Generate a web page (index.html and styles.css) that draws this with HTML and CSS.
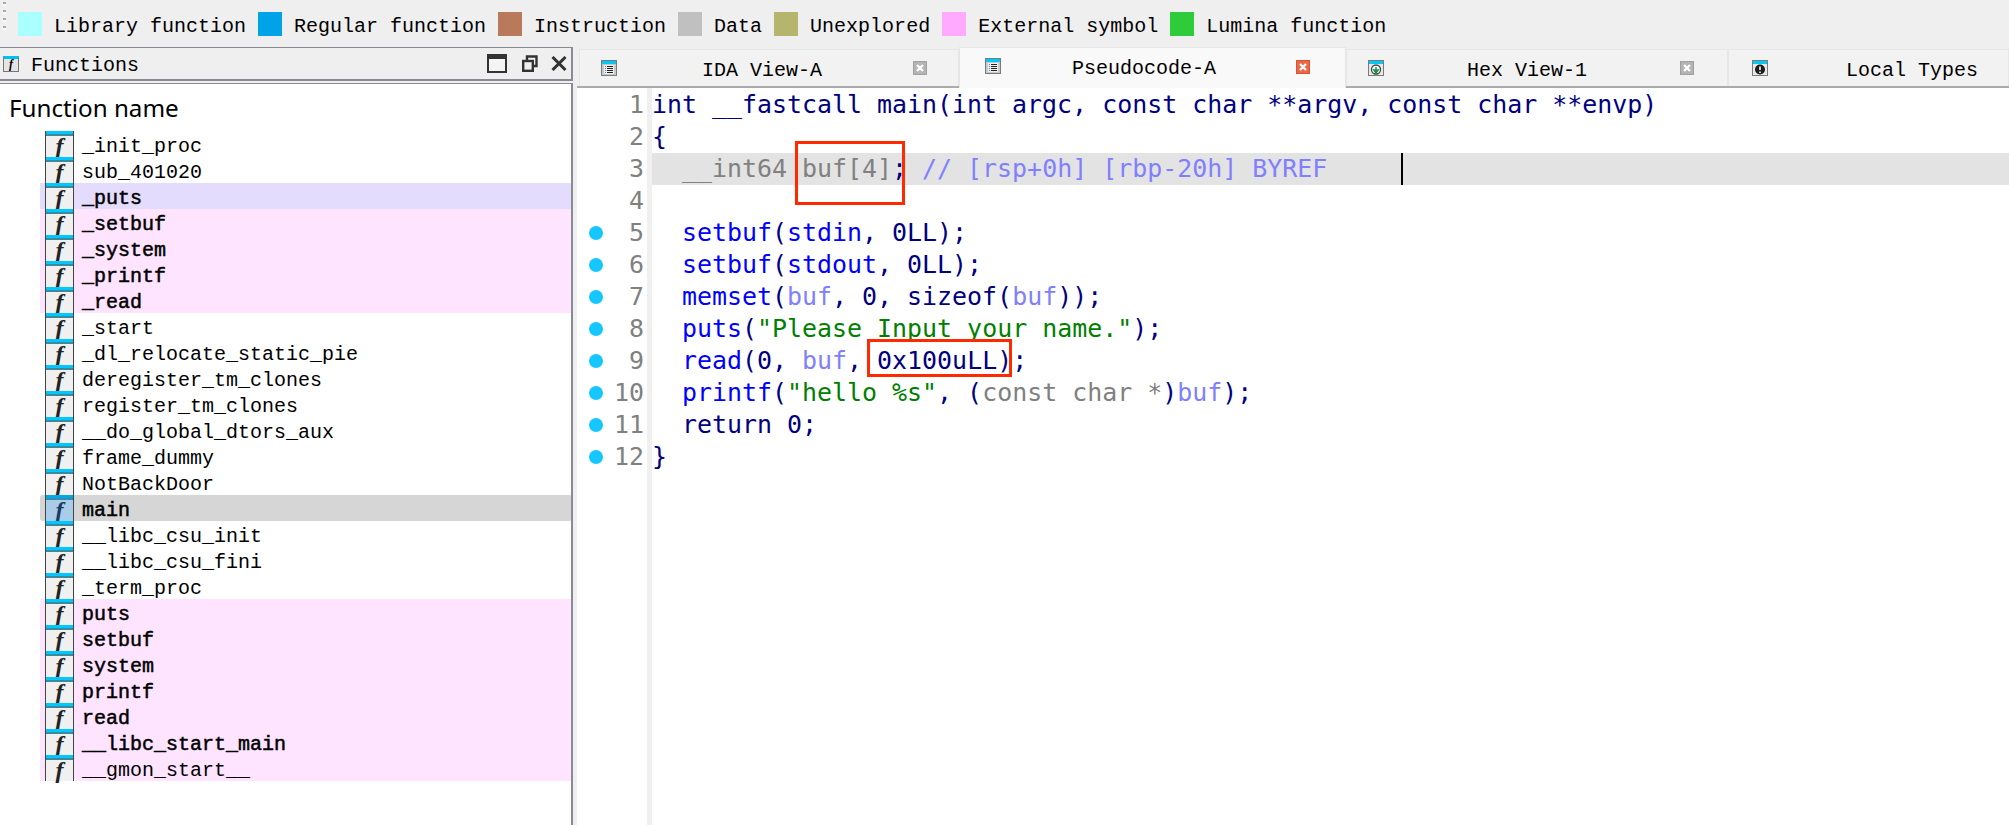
FILE: index.html
```html
<!DOCTYPE html>
<html lang="en">
<head>
  <meta charset="UTF-8" />
  <title>IDA - Pseudocode-A</title>
  <link rel="stylesheet" href="styles.css">
</head>
<body>
  <svg class="defs" width="0" height="0">
    <symbol id="doc" viewBox="0 0 16 16">
      <rect x="0.5" y="0.5" width="15" height="15" fill="#c8c8c8" stroke="#7a7a7a"/>
      <rect x="1" y="1" width="14" height="3" fill="#00c8f8"/>
      <rect x="3" y="5" width="10" height="9" fill="#f0f0f0"/>
      <path d="M4 6.5h1M4 8.5h1M4 10.5h1M4 12.5h1" stroke="#3a8ad0"/>
      <path d="M6 6.5h6M6 8.5h6M6 10.5h6M6 12.5h6" stroke="#222"/>
    </symbol>
    <symbol id="hex" viewBox="0 0 16 16">
      <rect x="0.5" y="0.5" width="15" height="15" fill="#e8e8e8" stroke="#7a7a7a"/>
      <rect x="1" y="1" width="14" height="3" fill="#00c8f8"/>
      <circle cx="8" cy="9.5" r="4.5" fill="#fff" stroke="#444" stroke-width="1.3"/>
      <path d="M8 7v6M5.8 10l2.2 3 2.2-3z" stroke="#0c9a4a" stroke-width="1.4" fill="#0c9a4a"/>
    </symbol>
    <symbol id="types" viewBox="0 0 16 16">
      <rect x="0.5" y="0.5" width="15" height="15" fill="#e8e8e8" stroke="#7a7a7a"/>
      <rect x="1" y="1" width="14" height="3" fill="#00c8f8"/>
      <circle cx="8" cy="9.5" r="5" fill="#1c1c1c"/>
      <path d="M8 6.5v3.5M8 11.5v1.5" stroke="#fff" stroke-width="1.6"/>
    </symbol>
    <symbol id="close" viewBox="0 0 14 14">
      <path d="M3.5 3.5l7 7M10.5 3.5l-7 7" stroke="#fff" stroke-width="2.6"/>
    </symbol>
  </svg>

  <div class="legend">
    <span class="grip"></span>
    <div class="legend-item"><i class="swatch lib"></i>Library function</div>
    <div class="legend-item"><i class="swatch regular"></i>Regular function</div>
    <div class="legend-item"><i class="swatch instr"></i>Instruction</div>
    <div class="legend-item"><i class="swatch data"></i>Data</div>
    <div class="legend-item"><i class="swatch unexplored"></i>Unexplored</div>
    <div class="legend-item"><i class="swatch external"></i>External symbol</div>
    <div class="legend-item"><i class="swatch lumina"></i>Lumina function</div>
  </div>

  <div class="panes">
    <div class="functions">
      <div class="titlebar">
        <span class="title-icon">f</span>
        <span class="title-text">Functions</span>
        <svg class="win-btn" width="20" height="19" viewBox="0 0 20 19">
          <rect x="1" y="1" width="18" height="17" fill="#f4f4f4" stroke="#333" stroke-width="2"/>
          <rect x="1" y="1" width="18" height="4" fill="#333"/>
        </svg>
        <svg class="win-btn restore" width="16" height="17" viewBox="0 0 16 17">
          <path d="M5 5V1.5h9.5V11H11" fill="none" stroke="#333" stroke-width="2.4"/>
          <rect x="1.2" y="6" width="9.6" height="9.8" fill="none" stroke="#333" stroke-width="2.4"/>
        </svg>
        <svg class="win-btn cross" width="16" height="15" viewBox="0 0 16 15">
          <path d="M1.5 1l13 13M14.5 1l-13 13" stroke="#333" stroke-width="3"/>
        </svg>
      </div>
      <div class="list">
        <div class="list-head">Function name</div>
        <div class="row"><span class="ficon">f</span>_init_proc</div>
        <div class="row"><span class="ficon">f</span>sub_401020</div>
        <div class="row thunk strong"><span class="ficon">f</span>_puts</div>
        <div class="row extern strong"><span class="ficon">f</span>_setbuf</div>
        <div class="row extern strong"><span class="ficon">f</span>_system</div>
        <div class="row extern strong"><span class="ficon">f</span>_printf</div>
        <div class="row extern strong"><span class="ficon">f</span>_read</div>
        <div class="row"><span class="ficon">f</span>_start</div>
        <div class="row"><span class="ficon">f</span>_dl_relocate_static_pie</div>
        <div class="row"><span class="ficon">f</span>deregister_tm_clones</div>
        <div class="row"><span class="ficon">f</span>register_tm_clones</div>
        <div class="row"><span class="ficon">f</span>__do_global_dtors_aux</div>
        <div class="row"><span class="ficon">f</span>frame_dummy</div>
        <div class="row"><span class="ficon">f</span>NotBackDoor</div>
        <div class="row selected strong"><span class="ficon">f</span>main</div>
        <div class="row"><span class="ficon">f</span>__libc_csu_init</div>
        <div class="row"><span class="ficon">f</span>__libc_csu_fini</div>
        <div class="row"><span class="ficon">f</span>_term_proc</div>
        <div class="row extern strong"><span class="ficon">f</span>puts</div>
        <div class="row extern strong"><span class="ficon">f</span>setbuf</div>
        <div class="row extern strong"><span class="ficon">f</span>system</div>
        <div class="row extern strong"><span class="ficon">f</span>printf</div>
        <div class="row extern strong"><span class="ficon">f</span>read</div>
        <div class="row extern strong"><span class="ficon">f</span>__libc_start_main</div>
        <div class="row extern"><span class="ficon">f</span>__gmon_start__</div>
      </div>
    </div>

    <div class="editor">
      <div class="tabs">
        <div class="tab tab-ida">
          <svg class="tab-icon"><use href="#doc"/></svg>
          <span class="tab-label">IDA View-A</span>
          <svg class="tab-close" viewBox="0 0 14 14"><use href="#close"/></svg>
        </div>
        <div class="tab tab-pseudo active">
          <svg class="tab-icon"><use href="#doc"/></svg>
          <span class="tab-label">Pseudocode-A</span>
          <svg class="tab-close" viewBox="0 0 14 14"><use href="#close"/></svg>
        </div>
        <div class="tab tab-hex">
          <svg class="tab-icon"><use href="#hex"/></svg>
          <span class="tab-label">Hex View-1</span>
          <svg class="tab-close" viewBox="0 0 14 14"><use href="#close"/></svg>
        </div>
        <div class="tab tab-types">
          <svg class="tab-icon"><use href="#types"/></svg>
          <span class="tab-label">Local Types</span>
        </div>
      </div>

      <div class="code-pane">
        <div class="gutter">
          <div class="gutter-row"><span class="num">1</span></div>
          <div class="gutter-row"><span class="num">2</span></div>
          <div class="gutter-row"><span class="num">3</span></div>
          <div class="gutter-row"><span class="num">4</span></div>
          <div class="gutter-row"><i class="dot"></i><span class="num">5</span></div>
          <div class="gutter-row"><i class="dot"></i><span class="num">6</span></div>
          <div class="gutter-row"><i class="dot"></i><span class="num">7</span></div>
          <div class="gutter-row"><i class="dot"></i><span class="num">8</span></div>
          <div class="gutter-row"><i class="dot"></i><span class="num">9</span></div>
          <div class="gutter-row"><i class="dot"></i><span class="num">10</span></div>
          <div class="gutter-row"><i class="dot"></i><span class="num">11</span></div>
          <div class="gutter-row"><i class="dot"></i><span class="num">12</span></div>
        </div>
        <div class="code">
          <div class="line">int __fastcall main(int argc, const char **argv, const char **envp)</div>
          <div class="line">{</div>
          <div class="line current">  <span class="gr">__int64 buf[4]</span>; <span class="lv">// [rsp+0h] [rbp-20h] BYREF</span><span class="caret"></span></div>
          <div class="line"></div>
          <div class="line">  <span class="fn">setbuf</span>(<span class="fn">stdin</span>, 0LL);</div>
          <div class="line">  <span class="fn">setbuf</span>(<span class="fn">stdout</span>, 0LL);</div>
          <div class="line">  <span class="fn">memset</span>(<span class="lv">buf</span>, 0, sizeof(<span class="lv">buf</span>));</div>
          <div class="line">  <span class="fn">puts</span>(<span class="str">"Please Input your name."</span>);</div>
          <div class="line">  <span class="fn">read</span>(0, <span class="lv">buf</span>, 0x100uLL);</div>
          <div class="line">  <span class="fn">printf</span>(<span class="str">"hello %s"</span>, (<span class="gr">const char *</span>)<span class="lv">buf</span>);</div>
          <div class="line">  return 0;</div>
          <div class="line">}</div>
          <div class="mark mark-buf"></div>
          <div class="mark mark-size"></div>
        </div>
      </div>
    </div>
  </div>
</body>
</html>
```
FILE: styles.css
```css
* {
  box-sizing: border-box;
}
html, body {
  margin: 0;
  height: 825px;
  overflow: hidden;
}
body {
  background: #efefef;
  font-family: "Liberation Mono", monospace;
  font-size: 20px;
  color: #000;
}
.defs {
  position: absolute;
}

/* legend */
.legend {
  display: flex;
  align-items: center;
  gap: 12px;
  height: 47px;
  padding: 0 0 0 18px;
  position: relative;
}
.grip {
  position: absolute;
  left: 3px;
  top: 2px;
  width: 3px;
  height: 32px;
  background: repeating-linear-gradient(#a8a8a8 0 2px, #fafafa 2px 4px, #efefef 4px 8px);
}
.legend-item {
  display: flex;
  align-items: flex-start;
  gap: 12px;
  height: 24px;
  line-height: 29px;
  white-space: pre;
}
.swatch {
  width: 24px;
  height: 24px;
}
.lib { background: #aaffff; }
.regular { background: #00a2e8; }
.instr { background: #b87a5a; }
.data { background: #c0c0c0; }
.unexplored { background: #b5b56e; }
.external { background: #ffaaff; }
.lumina { background: #2ecc3a; }

.panes {
  display: flex;
  height: 778px;
}

/* functions window */
.functions {
  width: 573px;
  display: flex;
  flex-direction: column;
}
.titlebar {
  display: flex;
  align-items: center;
  height: 34px;
  margin-bottom: 2px;
  padding-left: 3px;
  border: 1px solid #8a8a94;
  border-width: 1px 2px 2px 0;
  background: #efefef;
}
.title-icon {
  width: 16px;
  height: 16px;
  border: 1px solid #777;
  border-top: 3px solid #00c0f0;
  background: #e4e4e4;
  font: italic bold 12px/11px "Liberation Serif", serif;
  text-align: center;
}
.title-text {
  margin-left: 12px;
  flex: 1;
  line-height: 26px;
  height: 22px;
}
.win-btn {
  margin-right: 15px;
}
.win-btn.restore {
  margin-right: 13px;
}
.win-btn.cross {
  margin-right: 4px;
}
.list {
  flex: 1;
  background: #fff;
  border-top: 1px solid #8a8a94;
  border-right: 2px solid #8a8a94;
}
.list-head {
  height: 47px;
  padding: 8px 0 0 9px;
  font-family: "Noto Sans", sans-serif;
  font-size: 24.2px;
  line-height: 32px;
}
.row {
  display: flex;
  height: 26px;
  line-height: 32px;
  margin-left: 40px;
  padding-left: 5px;
  white-space: pre;
}
.row.strong {
  -webkit-text-stroke: 0.5px #000;
}
.ficon {
  width: 29px;
  height: 26px;
  margin-right: 8px;
  border: 1px solid #444;
  border-width: 0 1px;
  background: #f0f0f0 linear-gradient(#00c8ff 0 3px, #3a8a9c 3px 5px, transparent 5px);
  color: #222;
  font: italic bold 24px/30px "Liberation Serif", serif;
  text-align: center;
  -webkit-text-stroke: 0;
}
.thunk { background: #e3dcfd; }
.extern { background: #ffe4ff; }
.selected {
  background: #d6d6d6;
  border-radius: 3px 0 0 3px;
}
.selected .ficon {
  background: #a9cce9 linear-gradient(#00a8e8 0 3px, #3a8aac 3px 5px, transparent 5px);
  color: #1a3a60;
}

/* tabs + pseudocode */
.editor {
  flex: 1;
  margin-left: 4px;
  display: flex;
  flex-direction: column;
}
.tabs {
  display: flex;
  height: 41px;
  padding-left: 2px;
  border-bottom: 2px solid #ababab;
  background: #efefef;
}
.tab {
  display: flex;
  align-items: center;
  height: 37px;
  margin-top: 2px;
  background: #f2f2f2;
  border: 1px solid #e6e6e6;
  border-bottom: 0;
  white-space: pre;
}
.tab.active {
  height: 41px;
  margin-top: 0;
  background: #f9f9f9;
  z-index: 1;
  padding-bottom: 4px;
}
.tab-ida { width: 380px; padding-left: 21px; }
.tab-pseudo { width: 387px; padding-left: 25px; }
.tab-hex { width: 382px; padding-left: 21px; }
.tab-types { flex: 1; padding-left: 23px; }
.tab-icon {
  width: 16px;
  height: 16px;
}
.tab-label {
  line-height: 27px;
  height: 22px;
}
.tab-ida .tab-label { margin: 0 91px 0 85px; }
.tab-pseudo .tab-label { margin: 0 80px 0 71px; }
.tab-hex .tab-label { margin: 0 93px 0 83px; }
.tab-types .tab-label { margin-left: 78px; }
.tab-close {
  width: 14px;
  height: 14px;
  background: #b4b4b4;
  border: 1px solid #a0a0a0;
}
.tab.active .tab-close {
  background: #e8694a;
  border-color: #e05030;
  margin-top: 2px;
}
.code-pane {
  flex: 1;
  display: flex;
  background: #fff;
  font-family: "DejaVu Sans Mono", monospace;
  font-size: 24.93px;
  padding-top: 1px;
}
.gutter {
  width: 75px;
  margin-top: -1px;
  padding-top: 1px;
  border-right: 5px solid #f0f0f0;
}
.gutter-row {
  position: relative;
  height: 32px;
  line-height: 32px;
  padding-right: 3px;
  text-align: right;
  color: #808080;
}
.dot {
  position: absolute;
  left: 12px;
  top: 9px;
  width: 14px;
  height: 14px;
  border-radius: 50%;
  background: #14c8ff;
}
.code {
  flex: 1;
  position: relative;
  color: #000080;
}
.line {
  height: 32px;
  line-height: 32px;
  white-space: pre;
}
.line.current {
  background: #e3e3e3;
  position: relative;
}
.gr { color: #808080; }
.lv { color: #8080ff; }
.fn { color: #0000ff; }
.str { color: #008000; }
.caret {
  position: absolute;
  left: 749px;
  top: 0;
  width: 2px;
  height: 32px;
  background: #000;
}
.mark {
  position: absolute;
  border: 3px solid #ff2a00;
}
.mark-buf {
  left: 143px;
  top: 52px;
  width: 110px;
  height: 64px;
}
.mark-size {
  left: 215px;
  top: 250px;
  width: 145px;
  height: 38px;
}
```
